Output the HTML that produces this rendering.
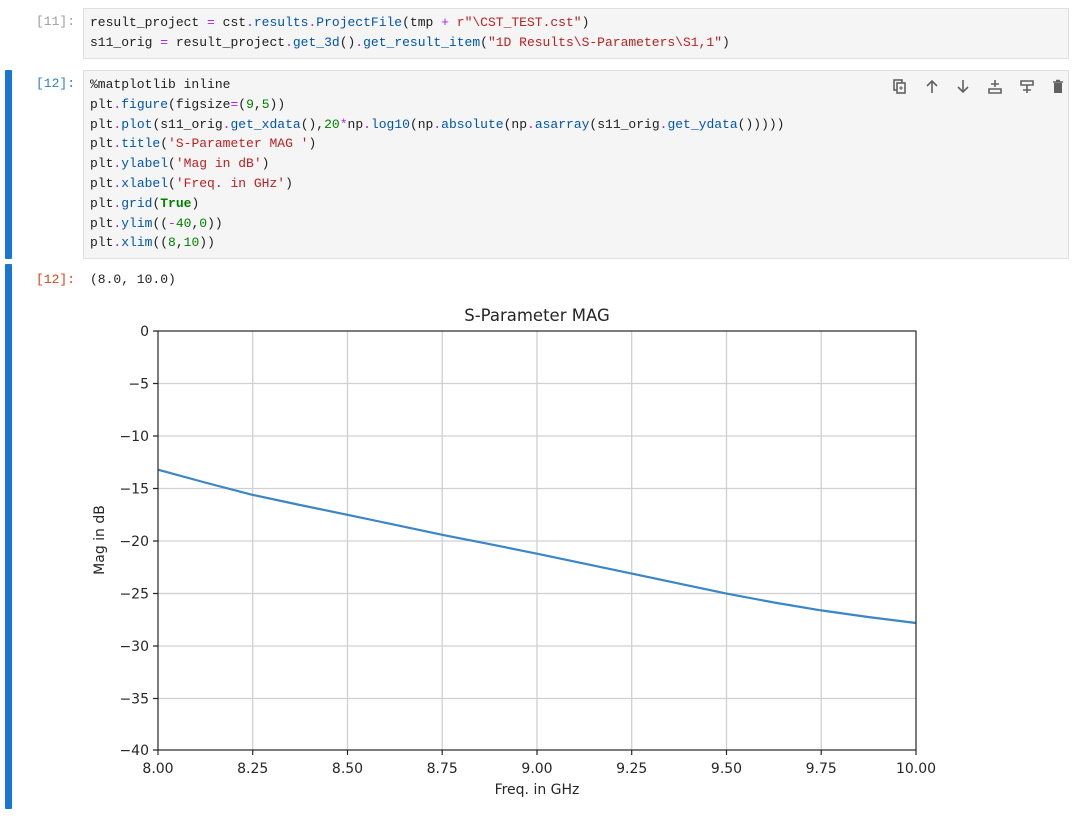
<!DOCTYPE html>
<html><head><meta charset="utf-8"><style>
body{margin:0;background:#fff;width:1080px;height:816px;overflow:hidden;position:relative;font-family:"Liberation Mono",monospace;}
.box{position:absolute;left:83px;width:986px;background:#f5f5f5;border:1px solid #e0e0e0;box-sizing:border-box;}
pre{margin:0;position:absolute;left:6px;top:4px;font-family:"Liberation Mono",monospace;font-size:13px;line-height:19.8px;color:#212121;}
.p{position:absolute;font-family:"Liberation Mono",monospace;font-size:13px;}
.bar{position:absolute;left:5px;width:7px;background:#1976d2;border-radius:1px;}
.o{color:#aa22ff}.f{color:#0055aa}.s{color:#ba2121}.n{color:#008000}.k{color:#008000;font-weight:bold}
</style></head><body>
<div class="p" style="left:36px;top:14px;color:#9e9e9e">[11]:</div>
<div class="box" style="top:8px;height:51px"><pre>result_project <span class="o">=</span> cst<span class="o">.</span><span class="f">results</span><span class="o">.</span><span class="f">ProjectFile</span>(tmp <span class="o">+</span> <span class="s">r"\CST_TEST.cst"</span>)
s11_orig <span class="o">=</span> result_project<span class="o">.</span><span class="f">get_3d</span>()<span class="o">.</span><span class="f">get_result_item</span>(<span class="s">"1D Results\S-Parameters\S1,1"</span>)</pre></div>

<div class="bar" style="top:70px;height:189px"></div>
<div class="p" style="left:36px;top:76px;color:#307fc1">[12]:</div>
<div class="box" style="top:70px;height:189px"><pre>%matplotlib inline
plt<span class="o">.</span><span class="f">figure</span>(figsize<span class="o">=</span>(<span class="n">9</span>,<span class="n">5</span>))
plt<span class="o">.</span><span class="f">plot</span>(s11_orig<span class="o">.</span><span class="f">get_xdata</span>(),<span class="n">20</span><span class="o">*</span>np<span class="o">.</span><span class="f">log10</span>(np<span class="o">.</span><span class="f">absolute</span>(np<span class="o">.</span><span class="f">asarray</span>(s11_orig<span class="o">.</span><span class="f">get_ydata</span>()))))
plt<span class="o">.</span><span class="f">title</span>(<span class="s">'S-Parameter MAG '</span>)
plt<span class="o">.</span><span class="f">ylabel</span>(<span class="s">'Mag in dB'</span>)
plt<span class="o">.</span><span class="f">xlabel</span>(<span class="s">'Freq. in GHz'</span>)
plt<span class="o">.</span><span class="f">grid</span>(<span class="k">True</span>)
plt<span class="o">.</span><span class="f">ylim</span>((<span class="o">-</span><span class="n">40</span>,<span class="n">0</span>))
plt<span class="o">.</span><span class="f">xlim</span>((<span class="n">8</span>,<span class="n">10</span>))</pre>
<svg style="position:absolute;left:806px;top:6px" width="180" height="20" viewBox="0 0 180 20" fill="none" stroke="#616161" stroke-width="1.6">
<rect x="4" y="3" width="8" height="10" /><rect x="7" y="6" width="8" height="10" fill="#f5f5f5"/><path d="M11 9v4M9 11h4" stroke-width="1"/>
<path d="M42 16V4M37 9l5-5 5 5"/>
<path d="M73 3v12M68 10l5 5 5-5"/>
<path d="M105 3v7M101 7h8M99 12h12v4H99z"/>
<path d="M131 4h12v4h-12zM137 8v8M133 13h8"/>
<path d="M163 5h10M166 3.5h4" /><rect x="164" y="6" width="8" height="10" fill="#616161" stroke="none"/>
</svg></div>

<div class="bar" style="top:264px;height:545px"></div>
<div class="p" style="left:36px;top:272px;color:#d84315">[12]:</div>
<div class="p" style="left:90px;top:272px;color:#212121">(8.0, 10.0)</div>

<svg style="position:absolute;left:0;top:0" width="1080" height="816" font-family="DejaVu Sans, sans-serif" font-size="14" fill="#262626">
<g stroke="#d0d0d0" stroke-width="1.3">
<path d="M252.7 331V750M347.5 331V750M442.2 331V750M537 331V750M631.7 331V750M726.5 331V750M821.2 331V750"/>
<path d="M158 383.5H916M158 436H916M158 488.5H916M158 541H916M158 593.5H916M158 646H916M158 698.5H916"/>
</g>
<polyline fill="none" stroke="#3a86c6" stroke-width="2.2" points="158,469.7 205,482.5 252.7,494.9 300,505 347.5,514.8 395,524.8 442.2,534.8 490,544.2 537,553.7 584,563.6 631.7,573.6 679,583.6 726.5,593.6 774,602.5 821.2,610.4 868,617 916,623"/>
<rect x="158" y="331" width="758" height="419" fill="none" stroke="#262626" stroke-width="1.2"/>
<g stroke="#262626" stroke-width="1.2">
<path d="M153 331h5M153 383.5h5M153 436h5M153 488.5h5M153 541h5M153 593.5h5M153 646h5M153 698.5h5M153 750h5"/>
<path d="M158 750v5M252.7 750v5M347.5 750v5M442.2 750v5M537 750v5M631.7 750v5M726.5 750v5M821.2 750v5M916 750v5"/>
</g>
<g text-anchor="end">
<text x="149" y="336">0</text><text x="149" y="388.5">−5</text><text x="149" y="441">−10</text><text x="149" y="493.5">−15</text><text x="149" y="546">−20</text><text x="149" y="598.5">−25</text><text x="149" y="651">−30</text><text x="149" y="703.5">−35</text><text x="149" y="755">−40</text>
</g>
<g text-anchor="middle">
<text x="158" y="773">8.00</text><text x="252.7" y="773">8.25</text><text x="347.5" y="773">8.50</text><text x="442.2" y="773">8.75</text><text x="537" y="773">9.00</text><text x="631.7" y="773">9.25</text><text x="726.5" y="773">9.50</text><text x="821.2" y="773">9.75</text><text x="916" y="773">10.00</text>
<text x="537" y="794">Freq. in GHz</text>
<text x="537" y="321" font-size="16.5">S-Parameter MAG</text>
<text transform="translate(104 540) rotate(-90)">Mag in dB</text>
</g>
</svg>
</body></html>
